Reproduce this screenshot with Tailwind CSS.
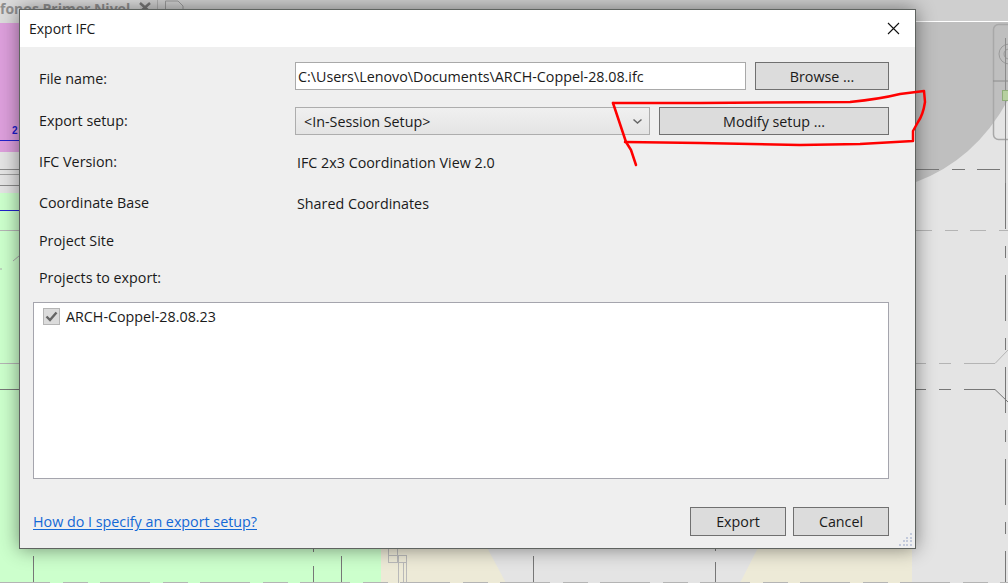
<!DOCTYPE html>
<html lang="en">
<head>
    <meta charset="UTF-8">
    <title>Export IFC</title>
    <script src="https://cdn.jsdelivr.net/npm/@tailwindcss/browser@4"></script>
</head>
<body class="bg-[#e4e4e4]">
<div class="relative w-[1008px] h-[583px] overflow-hidden font-['Open_Sans',sans-serif] text-[14.3px] leading-[21px] text-[#1a1a1a]">

    <!-- Drawing behind the dialog -->
    <svg class="absolute inset-0" width="1008" height="583" viewBox="0 0 1008 583">
        <rect x="0" y="0" width="1008" height="22" fill="#cfcfcf"/>
        <rect x="0" y="0" width="140" height="23" fill="#dcdcdc"/>
        <rect x="916" y="21" width="92" height="2" fill="#ffffff"/>
        <rect x="0" y="23" width="60" height="129" fill="#dd9fdc"/>
        <rect x="0" y="140" width="60" height="1" fill="#2222cc"/>
        <rect x="0" y="152" width="60" height="41" fill="#e4e4e4"/>
        <rect x="0" y="169" width="60" height="1" fill="#8a8a8a"/>
        <rect x="0" y="174" width="60" height="1" fill="#a0a0a0"/>
        <rect x="0" y="185" width="60" height="1" fill="#8a8a8a"/>
        <rect x="0" y="193" width="381" height="390" fill="#ccffcc"/>
        <rect x="0" y="210" width="60" height="1" fill="#2222cc"/>
        <rect x="0" y="230" width="60" height="1" fill="#b4b4b4"/>
        <rect x="0" y="363" width="60" height="1" fill="#b4b4b4"/>
        <rect x="0" y="389" width="60" height="1" fill="#777777"/>
        <path d="M13 261 L19 256" stroke="#aaaaaa" fill="none"/>
        <path d="M0 269 H2" stroke="#aaaaaa" fill="none"/>

        <polygon points="381,540 483,540 506,583 381,583" fill="#edead7"/>
        <polygon points="762,540 912,540 912,583 740,583" fill="#edead7"/>
        <g fill="none" stroke="#b9b9b9">
            <rect x="388.500" y="540.500" width="9" height="15"/>
            <rect x="388.500" y="555.500" width="9" height="7"/>
            <rect x="398.500" y="555.500" width="8" height="7"/>
            <path d="M398.500 563 V583 M403.500 563 V583 M406.500 563 V583"/>
        </g>

        <!-- Grey arc and navigation bar, top right -->
        <path d="M916 22 H1008 V100 Q975 160 916 182 Z" fill="#bfbfbf"/>
        <rect x="993.500" y="24.500" width="30" height="115" rx="5" fill="none" stroke="#a8a8a8" stroke-width="1.500"/>
        <circle cx="1009" cy="54" r="10" fill="none" stroke="#9a9a9a"/>
        <circle cx="1009" cy="54" r="5" fill="none" stroke="#9a9a9a"/>
        <path d="M1005.500 38 V183 M993 81 H1008" stroke="#8c8c8c" fill="none"/>
        <rect x="1002.500" y="90.500" width="8" height="10" fill="#b6d0a0" stroke="#8fae7a"/>

        <!-- Dashed grid lines -->
        <g fill="none" stroke="#777777">
            <path d="M916 169.500 H1008" stroke-dasharray="23 13 13 12"/>
            <path d="M916 389.500 H995 L1008 402" stroke-dasharray="10 13 12 13 60"/>
            <path d="M1005.500 183 V583" stroke-dasharray="46 17 12 17"/>
            <path d="M33.500 556 V583 M341.500 556 V583 M533.500 556 V583 M715.500 562 V583 M715.500 549 V551 M313.500 549 V552 M313.500 566 V583"/>
        </g>
        <g fill="none" stroke="#b4b4b4">
            <path d="M916 230.500 H1008" stroke-dasharray="16 13 13 12"/>
            <path d="M916 363.500 H995 L1008 350" stroke-dasharray="10 13 12 13 60"/>
            <path d="M0 582.500 H1008" stroke-dasharray="50 13 25 12"/>
        </g>

        <!-- Tab close and page icons -->
        <path d="M140 3 L150 12 M150 3 L140 12" stroke="#777777" stroke-width="2.500" fill="none"/>
        <path d="M165.500 10 V1 H178 L183 6 V10" stroke="#9a9a9a" fill="none"/>
        <rect x="157" y="0" width="1" height="22" fill="#b0b0b0"/>
        <text x="12" y="134" font-family="Liberation Sans, sans-serif" font-size="10" font-weight="700" fill="#1a1acc">2</text>
    </svg>
    <span class="absolute left-0 top-[-1px] text-[14px] leading-[20px] font-bold text-[#8f8f8f] whitespace-nowrap">fonos Primer Nivel</span>

    <!-- Dialog -->
    <div class="absolute left-[19px] top-[9px] w-[897px] h-[540px] flex flex-col bg-[#efefef] border border-[#5f6360] shadow-[0_0_18px_rgba(0,0,0,0.45)]">
        <div class="h-[37px] shrink-0 bg-white flex items-center justify-between pl-[9px] pr-[15px]">
            <span class="text-[14px]">Export IFC</span>
            <svg width="13" height="13" viewBox="0 0 13 13"><path d="M1 1 L12 12 M12 1 L1 12" stroke="#111111" stroke-width="1.100" fill="none"/></svg>
        </div>

        <div class="flex-1 flex flex-col pl-[19px] pr-[26px] pt-[15px]">
            <div class="h-[28px] flex items-center">
                <div class="w-[256px] pt-[4px]">File name:</div>
                <div class="w-[451px] h-[28px] flex items-center pl-[2px] bg-white border border-[#a9a9a9] whitespace-nowrap">C:\Users\Lenovo\Documents\ARCH-Coppel-28.08.ifc</div>
                <div class="ml-[9px] w-[134px] h-[28px] flex items-center justify-center bg-[#dcdcdc] border border-[#707070]">Browse ...</div>
            </div>

            <div class="mt-[17px] h-[28px] flex items-center">
                <div class="w-[256px] pb-[2px]">Export setup:</div>
                <div class="w-[355px] h-[28px] flex items-center justify-between pl-[8px] pr-[6px] bg-linear-to-b from-[#f0f0f0] to-[#e4e4e4] border border-[#adadad]">
                    <span>&lt;In-Session Setup&gt;</span>
                    <svg width="11" height="7" viewBox="0 0 11 7"><path d="M1.500 1.500 L5.500 5 L9.500 1.500" stroke="#666666" stroke-width="1.500" fill="none"/></svg>
                </div>
                <div class="ml-[9px] w-[230px] h-[28px] flex items-center justify-center bg-[#dcdcdc] border border-[#707070]">Modify setup ...</div>
            </div>

            <div class="mt-[13px] h-[28px] flex items-center">
                <div class="w-[258px] pb-[2px]">IFC Version:</div>
                <div>IFC 2x3 Coordination View 2.0</div>
            </div>
            <div class="mt-[13px] h-[28px] flex items-center">
                <div class="w-[258px] pb-[1px]">Coordinate Base</div>
                <div>Shared Coordinates</div>
            </div>
            <div class="mt-[9px] h-[28px] flex items-center">Project Site</div>
            <div class="mt-[9px] h-[28px] flex items-center">Projects to export:</div>

            <div class="mt-[11px] -ml-[6px] h-[177px] bg-white border border-[#a5a5ad] pl-[9px] pt-[5px]">
                <div class="flex items-center h-[17px]">
                    <div class="w-[17px] h-[17px] flex items-center justify-center bg-[#dcdcdc] border border-[#b5b5b5]">
                        <svg width="13" height="11" viewBox="0 0 13 11"><path d="M1.500 5.500 L5 9 L11.500 1.500" stroke="#666666" stroke-width="2.400" fill="none"/></svg>
                    </div>
                    <span class="ml-[6px]">ARCH-Coppel-28.08.23</span>
                </div>
            </div>

            <div class="mt-[28px] -ml-[6px] h-[29px] flex items-center justify-between">
                <a href="#" class="text-[#1368d6] underline underline-offset-2">How do I specify an export setup?</a>
                <div class="flex gap-[7px]">
                    <div class="w-[96px] h-[29px] flex items-center justify-center bg-[#dcdcdc] border border-[#707070]">Export</div>
                    <div class="w-[96px] h-[29px] flex items-center justify-center bg-[#dcdcdc] border border-[#707070]">Cancel</div>
                </div>
            </div>
        </div>

        <!-- Resize grip -->
        <svg class="absolute right-[2px] bottom-[1px]" width="14" height="15" viewBox="0 0 14 15" fill="#c3cadb">
            <rect x="11" y="1" width="2" height="2"/>
            <rect x="7" y="5" width="2" height="2"/><rect x="11" y="5" width="2" height="2"/>
            <rect x="4" y="8" width="2" height="2"/><rect x="7" y="8" width="2" height="2"/><rect x="11" y="8" width="2" height="2"/>
            <rect x="0" y="12" width="2" height="2"/><rect x="4" y="12" width="2" height="2"/><rect x="7" y="12" width="2" height="2"/><rect x="11" y="12" width="2" height="2"/>
        </svg>
    </div>

    <!-- Red hand-drawn annotation -->
    <svg class="absolute inset-0 pointer-events-none" width="1008" height="583" viewBox="0 0 1008 583" fill="none" stroke="#ff0000" stroke-width="2.500" stroke-linejoin="round" stroke-linecap="round">
        <path d="M613 103 L700 103 L850 102 Q880 99 900 94 L924 91 L925 102 Q923 115 918 122 L913 131 L913 141 L860 144 L800 145 L700 143 L625 142"/>
        <path d="M613 103 L626 142 L631 150 L636 165"/>
    </svg>
</div>
</body>
</html>
